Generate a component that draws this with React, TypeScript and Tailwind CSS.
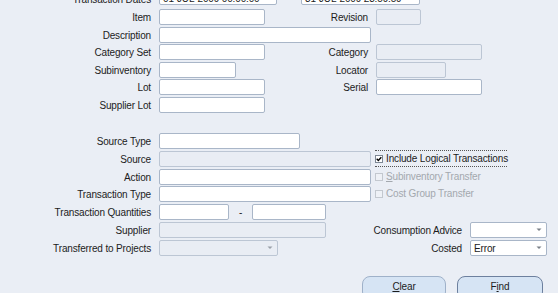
import React from "react";

const F = "font-['Liberation_Sans',Arial,sans-serif]";

function Label({ children, w = "w-[151px]" }: { children: React.ReactNode; w?: string }) {
  return (
    <div className={`${w} h-[16px] flex items-center justify-end text-[10px] text-[#1c1c1c] whitespace-nowrap`}>
      {children}
    </div>
  );
}

function Input({ w, disabled, value, extra = "" }: { w: string; disabled?: boolean; value?: string; extra?: string }) {
  return (
    <div
      className={`${w} h-[16px] shrink-0 rounded-[2px] border flex items-center pl-[3px] text-[10px] text-[#1c1c1c] overflow-hidden whitespace-nowrap ${extra} ${
        disabled ? "bg-[#e9edf4] border-[#bcc6d4]" : "bg-white border-[#a9b6c8]"
      }`}
    >
      {value}
    </div>
  );
}

function Select({ w, disabled, value }: { w: string; disabled?: boolean; value?: string }) {
  return (
    <div
      className={`${w} h-[16px] shrink-0 rounded-[2px] border flex items-center justify-between pl-[3px] pr-[4px] text-[10px] text-[#1c1c1c] ${
        disabled ? "bg-[#e9edf4] border-[#bcc6d4]" : "bg-white border-[#a9b6c8]"
      }`}
    >
      <span>{value}</span>
      <svg width="6" height="4" viewBox="0 0 6 4">
        <path d="M0.5 0.5 L5.5 0.5 L3 3 Z" fill={disabled ? "#9aa0a8" : "#7a8088"} />
      </svg>
    </div>
  );
}

function Check({ label, checked, disabled, focus }: { label: React.ReactNode; checked?: boolean; disabled?: boolean; focus?: boolean }) {
  return (
    <div
      className={`h-[17px] flex items-center gap-[3px] text-[10px] whitespace-nowrap ${
        focus ? "border-y border-dotted border-[#555] w-[132px]" : ""
      } ${disabled ? "text-[#a3a8ae]" : "text-[#1c1c1c]"}`}
    >
      <div
        className={`w-[8px] h-[8px] border flex items-center justify-center ${
          disabled ? "border-[#c3c8cf] bg-[#eef1f6]" : "border-[#7d8794] bg-white"
        }`}
      >
        {checked && (
          <svg width="7" height="6" viewBox="0 0 7 6">
            <path d="M0.8 2.8 L2.7 4.8 L6.2 0.9" stroke="#000" strokeWidth="1.6" fill="none" />
          </svg>
        )}
      </div>
      <span>{label}</span>
    </div>
  );
}

export default function App() {
  return (
    <div className={`w-[558px] h-[293px] overflow-hidden bg-[#eaeef5] tracking-[-0.15px] ${F}`}>
      <div className="-mt-[11px] flex flex-col">
        {/* Transaction Dates */}
        <div className="h-[20px] flex items-start">
          <div className="pt-[2px]"><Label>Transaction Dates</Label></div>
          <div className="ml-[8px]"><Input w="w-[118px]" value="01-JUL-2009 00:00:00" extra="pt-[3px]" /></div>
          <div className="w-[24px] h-[16px] pt-[3px] flex items-center justify-center text-[10px] text-[#1c1c1c]">-</div>
          <Input w="w-[119px]" value="31-JUL-2009 23:59:59" extra="pt-[3px]" />
        </div>
        {/* Item / Revision */}
        <div className="h-[18px] flex items-start">
          <Label>Item</Label>
          <div className="ml-[8px] w-[209px] flex items-start justify-between">
            <Input w="w-[106px]" />
            <Label w="w-auto">Revision</Label>
          </div>
          <div className="ml-[8px]"><Input w="w-[45px]" disabled /></div>
        </div>
        {/* Description */}
        <div className="h-[17px] flex items-start">
          <Label>Description</Label>
          <div className="ml-[8px]"><Input w="w-[212px]" /></div>
        </div>
        {/* Category Set / Category */}
        <div className="h-[18px] flex items-start">
          <Label>Category Set</Label>
          <div className="ml-[8px] w-[209px] flex items-start justify-between">
            <Input w="w-[106px]" />
            <Label w="w-auto">Category</Label>
          </div>
          <div className="ml-[8px]"><Input w="w-[106px]" disabled /></div>
        </div>
        {/* Subinventory / Locator */}
        <div className="h-[17px] flex items-start">
          <Label>Subinventory</Label>
          <div className="ml-[8px] w-[209px] flex items-start justify-between">
            <Input w="w-[77px]" />
            <Label w="w-auto">Locator</Label>
          </div>
          <div className="ml-[8px]"><Input w="w-[70px]" disabled /></div>
        </div>
        {/* Lot / Serial */}
        <div className="h-[18px] flex items-start">
          <Label>Lot</Label>
          <div className="ml-[8px] w-[209px] flex items-start justify-between">
            <Input w="w-[106px]" />
            <Label w="w-auto">Serial</Label>
          </div>
          <div className="ml-[8px]"><Input w="w-[106px]" /></div>
        </div>
        {/* Supplier Lot */}
        <div className="h-[36px] flex items-start">
          <Label>Supplier Lot</Label>
          <div className="ml-[8px]"><Input w="w-[106px]" /></div>
        </div>
        {/* Source Type */}
        <div className="h-[18px] flex items-start">
          <Label>Source Type</Label>
          <div className="ml-[8px]"><Input w="w-[141px]" /></div>
        </div>
        {/* Source */}
        <div className="h-[18px] flex items-start">
          <Label>Source</Label>
          <div className="ml-[8px]"><Input w="w-[212px]" disabled /></div>
          <div className="ml-[4px] -mt-[1px]">
            <Check label="Include Logical Transactions" checked focus />
          </div>
        </div>
        {/* Action */}
        <div className="h-[17px] flex items-start">
          <Label>Action</Label>
          <div className="ml-[8px]"><Input w="w-[212px]" /></div>
          <div className="ml-[4px] -mt-[1px]">
            <Check label={<><span className="underline">S</span>ubinventory Transfer</>} disabled />
          </div>
        </div>
        {/* Transaction Type */}
        <div className="h-[18px] flex items-start">
          <Label>Transaction Type</Label>
          <div className="ml-[8px]"><Input w="w-[212px]" /></div>
          <div className="ml-[4px] -mt-[1px]">
            <Check label="Cost Group Transfer" disabled />
          </div>
        </div>
        {/* Transaction Quantities */}
        <div className="h-[18px] flex items-start">
          <Label>Transaction Quantities</Label>
          <div className="ml-[8px]"><Input w="w-[70px]" /></div>
          <div className="w-[23px] h-[16px] flex items-center justify-center text-[10px] text-[#1c1c1c]">-</div>
          <Input w="w-[74px]" />
        </div>
        {/* Supplier / Consumption Advice */}
        <div className="h-[18px] flex items-start">
          <Label>Supplier</Label>
          <div className="ml-[8px]"><Input w="w-[167px]" disabled /></div>
          <Label w="w-[136px]">Consumption Advice</Label>
          <div className="ml-[8px]"><Select w="w-[77px]" /></div>
        </div>
        {/* Transferred to Projects / Costed */}
        <div className="h-[36px] flex items-start">
          <Label>Transferred to Projects</Label>
          <div className="ml-[8px]"><Select w="w-[119px]" disabled /></div>
          <Label w="w-[184px]">Costed</Label>
          <div className="ml-[8px]"><Select w="w-[77px]" value="Error" /></div>
        </div>
        {/* Buttons */}
        <div className="h-[24px] flex items-start pl-[362px] gap-[11px]">
          <button className="w-[84px] h-[24px] rounded-[8px] border border-[#9fb1c9] bg-[#d6e4f4] text-[10px] text-[#1c1c1c] pb-[4px]">
            <span className="underline">C</span>lear
          </button>
          <button className="w-[86px] h-[24px] rounded-[8px] border border-[#6d809e] bg-[#d6e4f4] text-[10px] text-[#1c1c1c] pb-[4px]">
            F<span className="underline">i</span>nd
          </button>
        </div>
      </div>
    </div>
  );
}
